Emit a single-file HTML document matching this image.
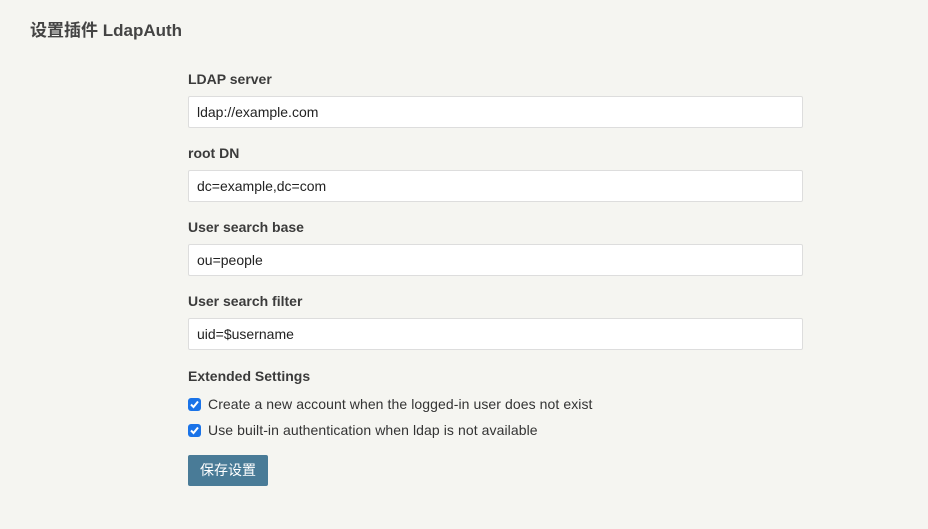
<!DOCTYPE html>
<html><head><meta charset="utf-8"><style>
body{margin:0;width:928px;height:529px;background:#f5f5f1;font-family:"Liberation Sans","Noto Sans CJK SC",sans-serif;color:#333;position:relative;overflow:hidden}
h1{position:absolute;left:30px;top:20px;margin:0;font-size:17px;font-weight:bold;color:#444;line-height:22px}
.l{position:absolute;left:188px;font-size:14px;font-weight:bold;color:#3b3b3b;line-height:16px}
.i{position:absolute;left:188px;background:#fff;border:1px solid #ddd;border-radius:2px;font-size:14px;line-height:30px;padding-left:8px;box-sizing:border-box;width:615px;height:32px;color:#222}
.c{position:absolute;left:188px;font-size:14px;color:#333;line-height:16px;letter-spacing:0.08px}
.cb{display:inline-block;width:13px;height:13px;background:#1a73e8;border-radius:3px;vertical-align:-2px;margin-right:7px;position:relative}
.cb svg{position:absolute;left:1px;top:1px}
.btn{position:absolute;left:188px;top:455px;width:80px;height:31px;background:#497b97;border-radius:2px;color:#fff;font-size:14px;line-height:31px;text-align:center}
</style></head><body>
<h1>设置插件 LdapAuth</h1>
<div class="l" style="top:71px">LDAP server</div>
<div class="i" style="top:96px">ldap://example.com</div>
<div class="l" style="top:145px">root DN</div>
<div class="i" style="top:170px">dc=example,dc=com</div>
<div class="l" style="top:219px">User search base</div>
<div class="i" style="top:244px">ou=people</div>
<div class="l" style="top:293px">User search filter</div>
<div class="i" style="top:318px">uid=$username</div>
<div class="l" style="top:368px">Extended Settings</div>
<div class="c" style="top:396px"><span class="cb"><svg width="11" height="11" viewBox="0 0 11 11"><path d="M2 5.5 L4.5 8 L9 2.5" stroke="#fff" stroke-width="2" fill="none"/></svg></span>Create a new account when the logged-in user does not exist</div>
<div class="c" style="top:422px"><span class="cb"><svg width="11" height="11" viewBox="0 0 11 11"><path d="M2 5.5 L4.5 8 L9 2.5" stroke="#fff" stroke-width="2" fill="none"/></svg></span>Use built-in authentication when ldap is not available</div>
<div class="btn">保存设置</div>
</body></html>
